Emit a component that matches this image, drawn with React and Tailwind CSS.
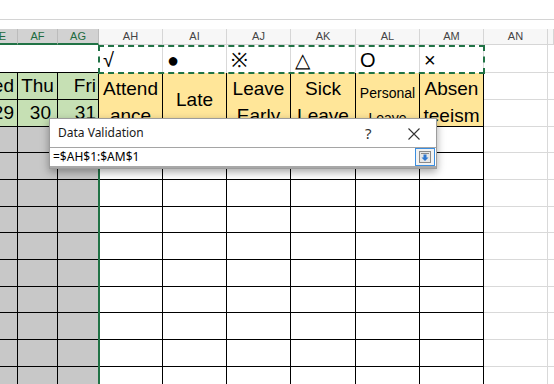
import React from 'react';

const cols = [18, 40, 41, 64, 64, 64, 65, 64, 64, 64, 6];
const letters = ['E', 'AF', 'AG', 'AH', 'AI', 'AJ', 'AK', 'AL', 'AM', 'AN', ''];
const symbols = ['√', '●', '※', '△', 'O', '×'];
const headers = [
  { lines: ['Attend', 'ance'] },
  { lines: ['Late'] },
  { lines: ['Leave', 'Early'] },
  { lines: ['Sick', 'Leave'] },
  { lines: ['Personal', 'Leave'], small: true },
  { lines: ['Absen', 'teeism'] },
];
const bodyRows = [26, 27, 27, 26, 27, 27, 26, 27, 27, 26];

const ColHeader = () => (
  <div className="flex h-[16px]">
    {letters.map((l, i) => {
      const picked = i < 3;
      return (
        <div
          key={i}
          style={{ width: cols[i] }}
          className={
            picked
              ? 'flex items-center justify-center bg-[#d2d2d2] border-r border-[#bcbcbc] border-b-2 border-b-[#217346] text-[11px] text-[#1d6b3e] overflow-hidden'
              : 'flex items-center justify-center bg-[#f7f7f7] border-r border-[#d6d6d6] border-b border-b-[#d6d6d6] text-[11px] text-[#444]'
          }
        >
          <span className={i === 0 ? '-ml-[12px]' : ''}>{l}</span>
        </div>
      );
    })}
  </div>
);

const SymbolRow = () => (
  <div className="flex h-[28px]">
    <div className="w-[99px] bg-white border-b border-black" />
    {symbols.map((s, i) => (
      <div
        key={i}
        style={{ width: cols[i + 3] }}
        className="flex items-center pl-[4px] pt-[2px] bg-white border-r border-[#d9d9d9] text-[20px] leading-none text-black"
      >
        {s}
      </div>
    ))}
    <div className="w-[64px] border-r border-b border-[#d9d9d9]" />
    <div className="w-[6px] border-b border-[#d9d9d9]" />
  </div>
);

const TitleRows = () => (
  <div className="flex h-[54px]">
    {[
      ['ed', '29', 'justify-end pr-[3px]', 'justify-end pr-[3px]'],
      ['Thu', '30', 'justify-center', 'justify-end pr-[6px]'],
      ['Fri', '31', 'justify-end pr-[2px]', 'justify-end pr-[2px]'],
    ].map(([a, b, ja, jb], i) => (
      <div key={i} style={{ width: cols[i] }} className="flex flex-col">
        <div className={`h-[27px] flex items-center ${ja} bg-[#c6e0b4] border-r border-b border-black text-[19px] overflow-hidden whitespace-nowrap`}>
          {a}
        </div>
        <div className={`h-[27px] flex items-center ${jb} bg-[#c6e0b4] border-r border-b border-black text-[19px] overflow-hidden whitespace-nowrap`}>
          {b}
        </div>
      </div>
    ))}
    {headers.map((h, i) => (
      <div
        key={i}
        style={{ width: cols[i + 3] }}
        className={`flex flex-col items-center ${h.lines.length === 1 ? 'justify-center' : 'justify-start pt-[2px]'} bg-[#ffe699] border-r border-b border-black overflow-hidden`}
      >
        {h.lines.map((t, j) => (
          <div
            key={j}
            className={
              h.small
                ? j === 0
                  ? 'text-[14px] leading-[15px] mt-[11px] whitespace-nowrap'
                  : 'text-[14px] leading-[15px] mt-[10px] whitespace-nowrap'
                : 'text-[19px] leading-[27px] whitespace-nowrap'
            }
          >
            {t}
          </div>
        ))}
      </div>
    ))}
    <div className="w-[64px] flex flex-col">
      <div className="h-[27px] border-r border-b border-[#d9d9d9]" />
      <div className="h-[27px] border-r border-b border-[#d9d9d9]" />
    </div>
    <div className="w-[6px] flex flex-col">
      <div className="h-[27px] border-b border-[#d9d9d9]" />
      <div className="h-[27px] border-b border-[#d9d9d9]" />
    </div>
  </div>
);

const BodyRow = ({ h }) => (
  <div className="flex" style={{ height: h }}>
    {cols.map((w, i) => {
      let cls = 'border-r border-b border-black bg-white';
      if (i < 3) cls = 'border-r border-b border-black bg-[#c8c8c8]';
      if (i === 9) cls = 'border-r border-b border-[#d9d9d9] bg-white';
      if (i === 10) cls = 'border-b border-[#d9d9d9] bg-white';
      return <div key={i} style={{ width: w }} className={cls} />;
    })}
  </div>
);

const RefButton = () => (
  <div className="w-[20px] h-[18px] border border-[#3b8ee0] bg-[#f2f2f2] flex items-center justify-center">
    <svg width="12" height="12" viewBox="0 0 12 12">
      <rect x="0.5" y="0.5" width="11" height="11" fill="#e6e6e6" stroke="#8a8a8a" />
      <line x1="2" y1="2.5" x2="10" y2="2.5" stroke="#8a8a8a" />
      <path d="M4.5 3.5 h3 v3 h2 l-3.5 3.5 l-3.5 -3.5 h2 z" fill="#2f78d0" />
    </svg>
  </div>
);

const Dialog = () => (
  <div className="absolute left-[49px] top-[118px] w-[388px] bg-white border border-[#9c9c9c] shadow-[0_3px_8px_rgba(0,0,0,0.35)] font-['Noto_Sans',sans-serif]">
    <div className="h-[29px] flex items-center pl-[8px] border-b border-[#a5a5a5] relative">
      <span className="text-[12px] text-[#1a1a1a]">Data Validation</span>
      <span className="absolute left-[315px] top-[3px] text-[15px] text-[#333]">?</span>
      <svg className="absolute left-[358px] top-[9px]" width="12" height="12" viewBox="0 0 12 12">
        <path d="M0.5 0.5 L11.5 11.5 M11.5 0.5 L0.5 11.5" stroke="#333" strokeWidth="1.1" />
      </svg>
    </div>
    <div className="h-[20px] flex items-center justify-between pl-[3px] pr-[1px] border-b-2 border-[#a8a8a8]">
      <span className="text-[12px] text-black">=$AH$1:$AM$1</span>
      <RefButton />
    </div>
  </div>
);

export default function App() {
  return (
    <div className="relative w-[554px] h-[384px] overflow-hidden bg-white font-['Liberation_Sans',Arial,sans-serif] text-black">
      <div className="h-[20px] border-b border-[#d4d4d4]" />
      <div className="h-[9px]" />
      <ColHeader />
      <SymbolRow />
      <TitleRows />
      {bodyRows.map((h, i) => (
        <BodyRow key={i} h={h} />
      ))}

      {/* copy marquee round AH1:AM1 */}
      <div className="absolute left-[98px] top-[45px] w-[387px] h-[29px] border-2 border-dashed border-[#217346] pointer-events-none" />
      {/* selection edge */}
      <div className="absolute left-[98px] top-[127px] w-[2px] bottom-0 bg-[#217346]" />

      <Dialog />
    </div>
  );
}
